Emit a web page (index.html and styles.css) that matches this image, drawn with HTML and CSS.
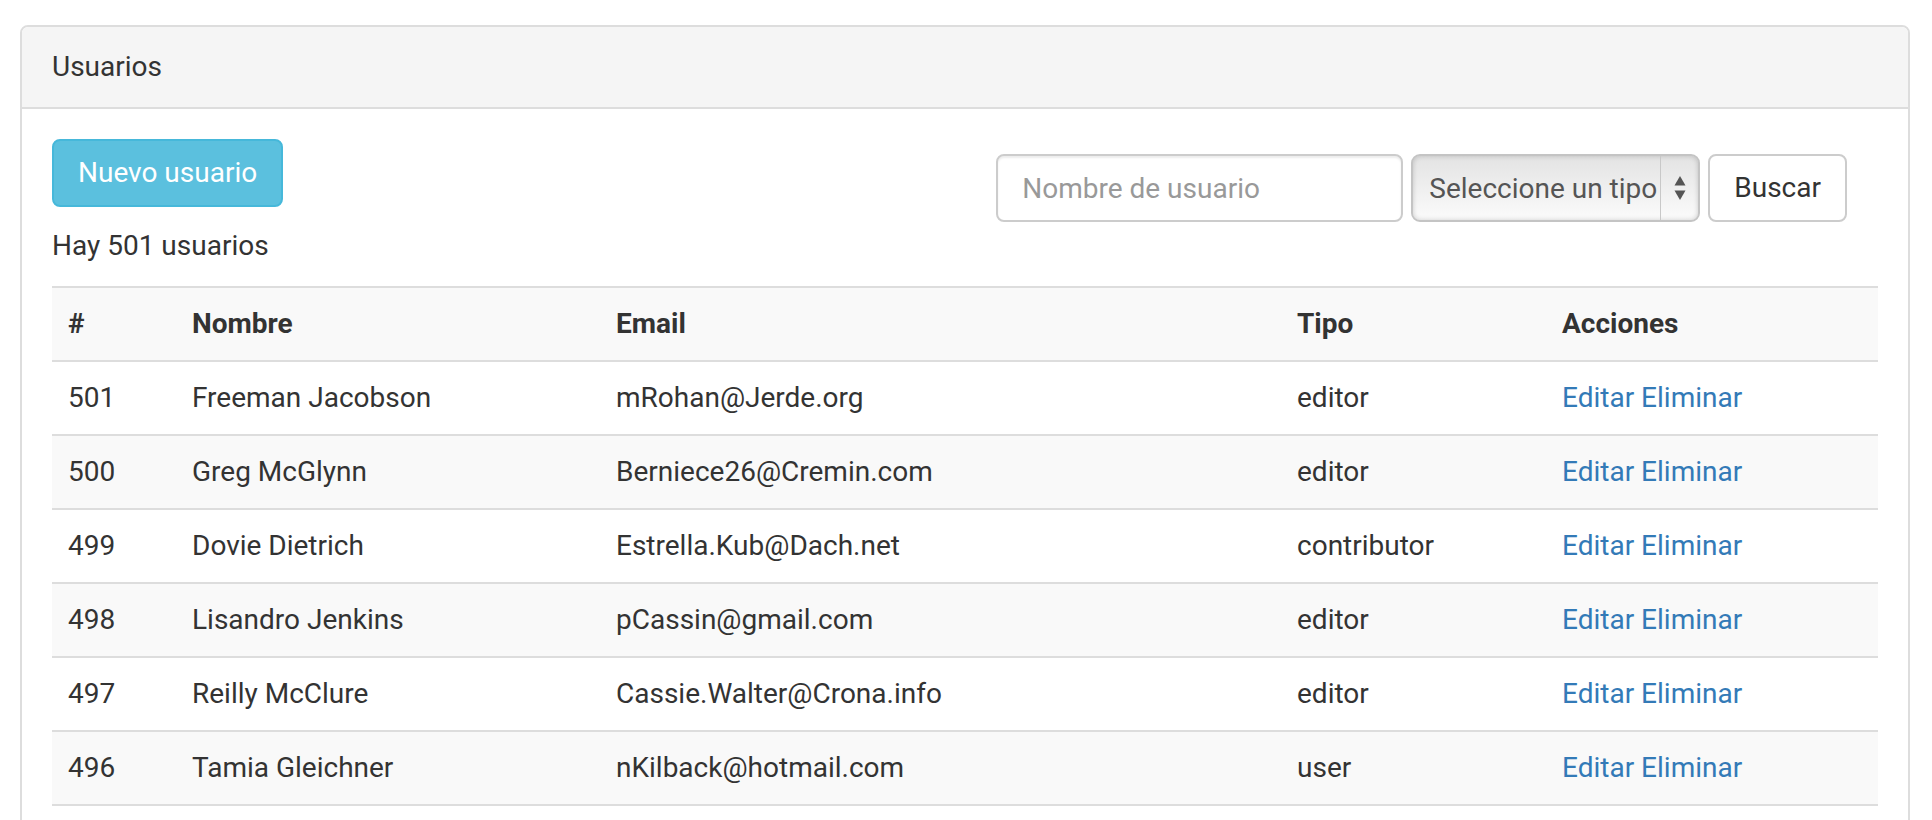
FILE: index.html
```html
<!doctype html>
<html lang="es">
    <head>
        <meta charset="UTF-8" />
        <meta name="viewport" content="width=device-width, initial-scale=1.0" />
        <title>Usuarios</title>
        <link rel="stylesheet" href="styles.css">
    </head>
    <body>
        <div class="panel">
            <div class="panel-heading">Usuarios</div>

            <div class="panel-body">
                <div class="toolbar">
                    <div class="toolbar-left">
                        <button class="btn btn-info">Nuevo usuario</button>
                        <p class="count">Hay 501 usuarios</p>
                    </div>

                    <form class="search-form" onsubmit="return false;">
                        <input class="form-control name-input" type="text" placeholder="Nombre de usuario" />
                        <div class="select-box">
                            <select class="type-select">
                                <option>Seleccione un tipo</option>
                                <option>editor</option>
                                <option>contributor</option>
                                <option>user</option>
                            </select>
                            <span class="select-arrows">
                                <svg width="12" height="26" viewBox="0 0 12 26">
                                    <path d="M6 1 L11.5 10.5 L0.5 10.5 Z" fill="#555"></path>
                                    <path d="M6 25 L11.5 15.5 L0.5 15.5 Z" fill="#555"></path>
                                </svg>
                            </span>
                        </div>
                        <button class="btn btn-default">Buscar</button>
                    </form>
                </div>

                <table class="table">
                    <colgroup>
                        <col class="col-id" />
                        <col class="col-name" />
                        <col class="col-email" />
                        <col class="col-type" />
                        <col class="col-actions" />
                    </colgroup>
                    <thead>
                        <tr>
                            <th>#</th>
                            <th>Nombre</th>
                            <th>Email</th>
                            <th>Tipo</th>
                            <th>Acciones</th>
                        </tr>
                    </thead>
                    <tbody>
                        <tr>
                            <td>501</td>
                            <td>Freeman Jacobson</td>
                            <td>mRohan@Jerde.org</td>
                            <td>editor</td>
                            <td><a href="#">Editar</a> <a href="#">Eliminar</a></td>
                        </tr>
                        <tr>
                            <td>500</td>
                            <td>Greg McGlynn</td>
                            <td>Berniece26@Cremin.com</td>
                            <td>editor</td>
                            <td><a href="#">Editar</a> <a href="#">Eliminar</a></td>
                        </tr>
                        <tr>
                            <td>499</td>
                            <td>Dovie Dietrich</td>
                            <td>Estrella.Kub@Dach.net</td>
                            <td>contributor</td>
                            <td><a href="#">Editar</a> <a href="#">Eliminar</a></td>
                        </tr>
                        <tr>
                            <td>498</td>
                            <td>Lisandro Jenkins</td>
                            <td>pCassin@gmail.com</td>
                            <td>editor</td>
                            <td><a href="#">Editar</a> <a href="#">Eliminar</a></td>
                        </tr>
                        <tr>
                            <td>497</td>
                            <td>Reilly McClure</td>
                            <td>Cassie.Walter@Crona.info</td>
                            <td>editor</td>
                            <td><a href="#">Editar</a> <a href="#">Eliminar</a></td>
                        </tr>
                        <tr>
                            <td>496</td>
                            <td>Tamia Gleichner</td>
                            <td>nKilback@hotmail.com</td>
                            <td>user</td>
                            <td><a href="#">Editar</a> <a href="#">Eliminar</a></td>
                        </tr>
                    </tbody>
                </table>
            </div>
        </div>
    </body>
</html>
```

FILE: styles.css
```css
* {
    box-sizing: border-box;
}

body {
    margin: 0;
    background: #fff;
    color: #333;
    font-family: Roboto, "Helvetica Neue", Arial, sans-serif;
    font-size: 28px;
    line-height: 40px;
}

.panel {
    margin: 25px 22px 0 20px;
    border: 2px solid #ddd;
    border-radius: 8px;
    background: #fff;
}

.panel-heading {
    padding: 20px 30px;
    background: #f5f5f5;
    border-bottom: 2px solid #ddd;
    border-radius: 6px 6px 0 0;
    color: #333;
}

.panel-body {
    padding: 30px;
}

.toolbar {
    display: flex;
    justify-content: space-between;
    align-items: flex-start;
}

.count {
    margin: 19px 0 0;
}

.btn {
    height: 68px;
    padding: 0 24px;
    border: 2px solid transparent;
    border-radius: 8px;
    font-family: inherit;
    font-size: 28px;
    line-height: 40px;
    cursor: pointer;
}

.btn-info {
    background: #5bc0de;
    border-color: #46b8da;
    color: #fff;
}

.btn-default {
    background: #fff;
    border-color: #ccc;
    color: #333;
}

.search-form {
    display: flex;
    gap: 8px;
    margin: 15px 31px 0 0;
}

.form-control {
    height: 68px;
    padding: 12px 24px;
    border: 2px solid #ccc;
    border-radius: 8px;
    font-family: inherit;
    font-size: 28px;
    color: #555;
    box-shadow: inset 0 2px 2px rgba(0, 0, 0, 0.075);
}

.form-control::placeholder {
    color: #999;
}

.name-input {
    width: 407px;
}

.select-box {
    display: flex;
    width: 289px;
    height: 68px;
    border: 2px solid #c4c4c4;
    border-radius: 9px;
    background: linear-gradient(#e3e3e3, #fbfbfb);
    box-shadow: inset 0 0 5px rgba(0, 0, 0, 0.18);
}

.type-select {
    flex: 1;
    min-width: 0;
    padding: 0 0 0 16px;
    border: none;
    background: transparent;
    font-family: inherit;
    font-size: 28px;
    color: #555;
    appearance: none;
    -webkit-appearance: none;
    outline: none;
}

.select-arrows {
    width: 38px;
    display: flex;
    align-items: center;
    justify-content: center;
    border-left: 1px solid #c8c8c8;
}

.table {
    width: 100%;
    margin-top: 20px;
    border-collapse: collapse;
    table-layout: fixed;
    border-top: 2px solid #ddd;
}

.col-id {
    width: 124px;
}

.col-name {
    width: 424px;
}

.col-email {
    width: 681px;
}

.col-type {
    width: 265px;
}

.table th,
.table td {
    padding: 16px;
    text-align: left;
    vertical-align: top;
    white-space: nowrap;
}

.table th {
    font-weight: 700;
}

.table tr {
    border-bottom: 2px solid #ddd;
}

.table thead tr,
.table tbody tr:nth-child(even) {
    background: #f9f9f9;
}

.table a {
    color: #337ab7;
    text-decoration: none;
}
```
